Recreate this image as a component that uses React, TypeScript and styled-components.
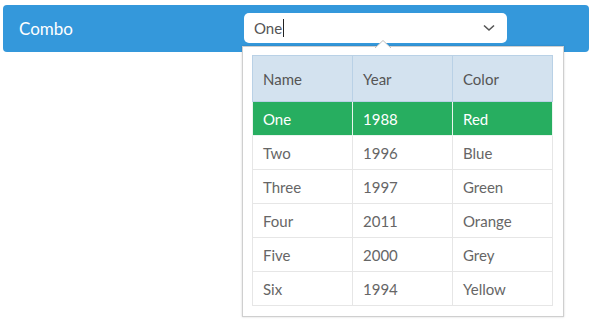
import React from "react";
import styled, { createGlobalStyle } from "styled-components";

const Global = createGlobalStyle`
  html, body { margin: 0; padding: 0; background: #ffffff; }
  body { font-family: Lato, "Open Sans", sans-serif; }
`;

const Page = styled.div`
  width: 589px;
  height: 320px;
  padding-top: 5px;
  box-sizing: border-box;
  overflow: hidden;
`;

const Bar = styled.div`
  margin: 0 0 0 3px;
  height: 47px;
  background: #3498db;
  border-radius: 4px;
  display: flex;
  align-items: center;
`;

const Label = styled.div`
  width: 225px;
  padding-left: 16px;
  color: #ffffff;
  font-size: 17px;
`;

const Combo = styled.div`
  position: relative;
  width: 263px;
  height: 30px;
  margin-top: -1px;
`;

const Field = styled.div`
  height: 30px;
  background: #ffffff;
  border-radius: 5px;
  display: flex;
  align-items: center;
  padding: 0 12px 0 10px;
  box-sizing: border-box;
  color: #555555;
  font-size: 15px;
`;

const Value = styled.span`
  flex: 1;
  display: flex;
  align-items: center;
`;

const Caret = styled.span`
  display: inline-block;
  width: 1px;
  height: 18px;
  background: #222;
  margin-left: 1px;
`;

const Popup = styled.div`
  position: absolute;
  left: -2px;
  top: 33px;
  width: 322px;
  box-sizing: border-box;
  background: #ffffff;
  border: 1px solid #cfcfcf;
  box-shadow: 0 0 2px rgba(0, 0, 0, 0.18);
  padding: 8px 10px 10px 9px;
  z-index: 2;
`;

const Arrow = styled.svg`
  position: absolute;
  left: 132px;
  top: -7px;
`;

const Table = styled.table`
  border-collapse: collapse;
  width: 301px;
  table-layout: fixed;
  font-size: 15px;
  color: #666666;
`;

const HeadCell = styled.th`
  height: 46px;
  padding: 0 0 0 10px;
  text-align: left;
  font-weight: normal;
  color: #555555;
  background: #d3e2ef;
  border: 1px solid #b9d1e6;
  box-sizing: border-box;
`;

const Row = styled.tr<{ $selected?: boolean }>`
  background: ${(p) => (p.$selected ? "#27ae60" : "#ffffff")};
  color: ${(p) => (p.$selected ? "#ffffff" : "#666666")};
`;

const Cell = styled.td<{ $selected?: boolean }>`
  height: 34px;
  padding: 0 0 0 10px;
  box-sizing: border-box;
  border: 1px solid ${(p) => (p.$selected ? "#e9f5ee" : "#e6e6e6")};
  border-top-color: ${(p) => (p.$selected ? "#b9d1e6" : "#e6e6e6")};
`;

const rows = [
  ["One", "1988", "Red"],
  ["Two", "1996", "Blue"],
  ["Three", "1997", "Green"],
  ["Four", "2011", "Orange"],
  ["Five", "2000", "Grey"],
  ["Six", "1994", "Yellow"],
];

export default function App() {
  return (
    <Page>
      <Global />
      <Bar>
        <Label>Combo</Label>
        <Combo>
          <Field>
            <Value>
              One
              <Caret />
            </Value>
            <svg width="12" height="8" viewBox="0 0 12 8">
              <path d="M1 1.5 L6 6 L11 1.5" fill="none" stroke="#555" strokeWidth="1.6" />
            </svg>
          </Field>
          <Popup>
            <Arrow width="16" height="8" viewBox="0 0 16 8">
              <path d="M0 8 L8 0.5 L16 8 Z" fill="#fff" />
              <path d="M0 8 L8 0.5 L16 8" fill="none" stroke="#bdbdbd" strokeWidth="1" />
            </Arrow>
            <Table>
              <thead>
                <tr>
                  <HeadCell>Name</HeadCell>
                  <HeadCell>Year</HeadCell>
                  <HeadCell>Color</HeadCell>
                </tr>
              </thead>
              <tbody>
                {rows.map((r, i) => (
                  <Row key={r[0]} $selected={i === 0}>
                    {r.map((c) => (
                      <Cell key={c} $selected={i === 0}>
                        {c}
                      </Cell>
                    ))}
                  </Row>
                ))}
              </tbody>
            </Table>
          </Popup>
        </Combo>
      </Bar>
    </Page>
  );
}
